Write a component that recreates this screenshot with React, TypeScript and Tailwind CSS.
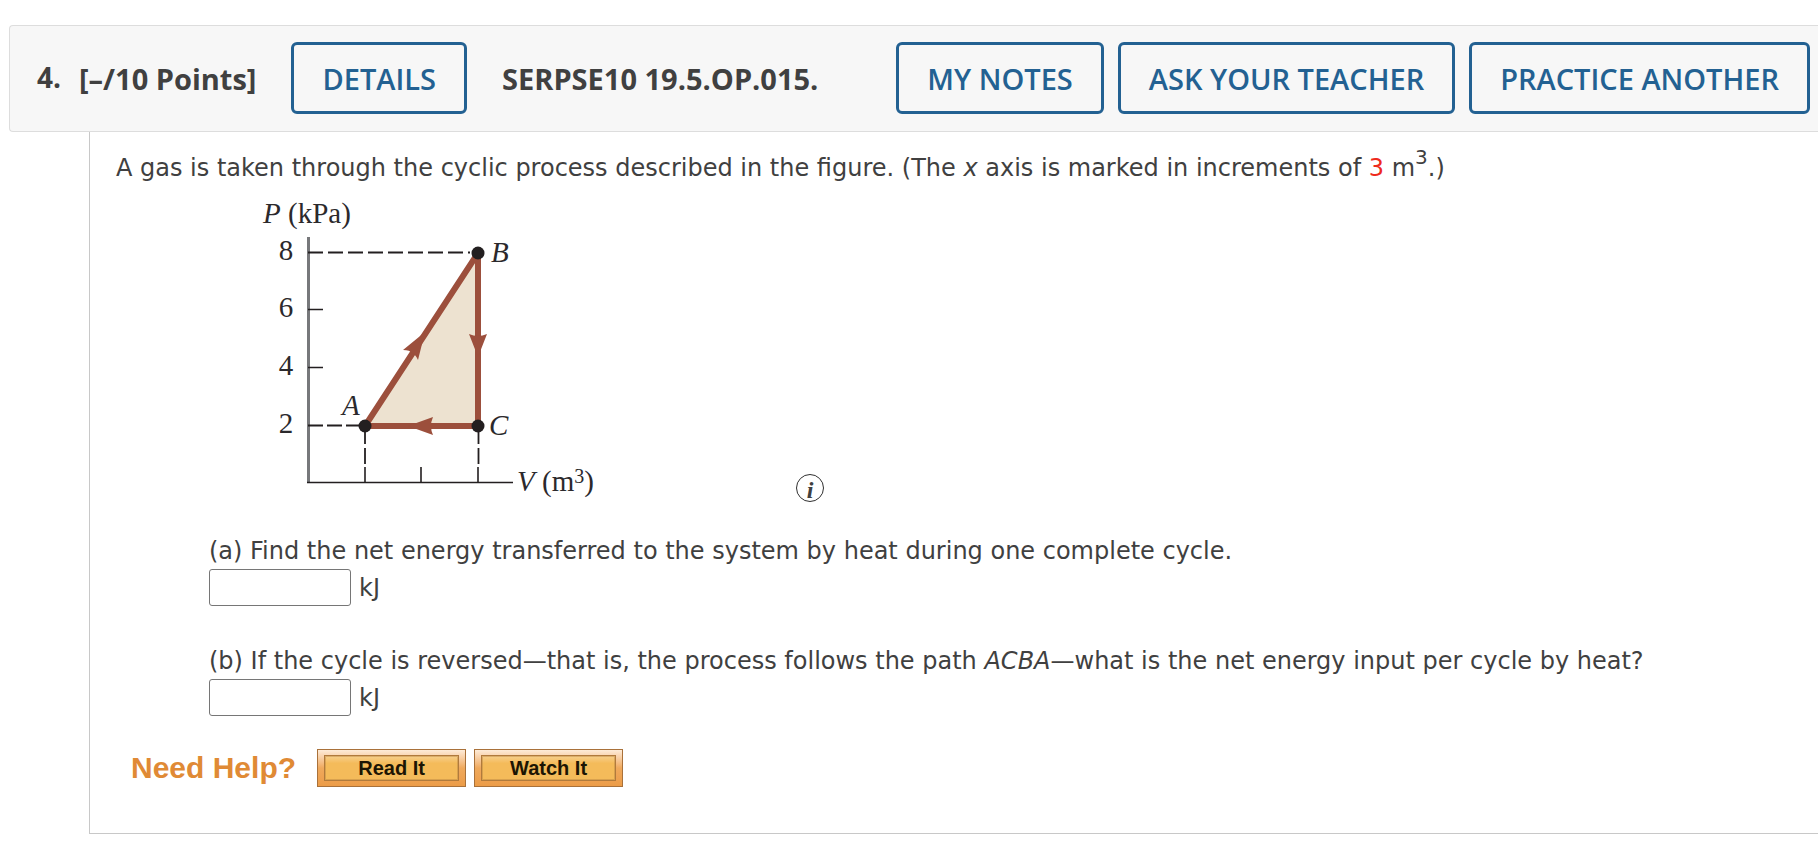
import type { ReactNode } from 'react'

const ACTIONS = ['MY NOTES', 'ASK YOUR TEACHER', 'PRACTICE ANOTHER']

const PARTS = [
  {
    id: 'a',
    question: <>(a) Find the net energy transferred to the system by heat during one complete cycle.</>,
  },
  {
    id: 'b',
    question: (
      <>
        (b) If the cycle is reversed—that is, the process follows the path <i>ACBA</i>—what is the net
        energy input per cycle by heat?
      </>
    ),
  },
]

const Y_TICKS = [
  { label: '8', y: 75 },
  { label: '6', y: 132 },
  { label: '4', y: 190 },
  { label: '2', y: 248 },
]

function OutlineButton({ children }: { children: ReactNode }) {
  return (
    <button
      type="button"
      className="h-[72px] shrink-0 rounded-md border-3 border-[#236192] px-7 pt-0.5 text-[29px] font-semibold whitespace-nowrap text-[#236192]"
    >
      {children}
    </button>
  )
}

function HelpButton({ children }: { children: ReactNode }) {
  return (
    <button
      type="button"
      className="h-[38px] w-[149px] border border-[#a9713a] bg-linear-to-b from-[#fdebd8] via-[#efa95c] to-[#ec9c48] px-1.5 py-[5px]"
    >
      <span className="flex h-full items-center justify-center border border-[#b07a3c] bg-linear-to-b from-[#f7d08c] via-[#f4bb5a] via-30% to-[#f4bb5a] text-xl font-bold text-[#1c1503] ring-1 ring-[#b07a3c]/40 ring-inset">
        {children}
      </span>
    </button>
  )
}

function PVDiagram() {
  return (
    <svg
      viewBox="0 7 400 320"
      role="img"
      aria-label="Pressure against volume for the cycle A to B to C"
      className="h-[320px] w-[400px] font-['Liberation_Serif',serif] text-[29px]"
    >
      <polygon points="135,249 248,76 248,249" fill="#ede2d0" />

      {/* Axes */}
      <g stroke="#231f20" fill="none">
        <path d="M78.500 60V305.500" strokeWidth="3" stroke="#77787b" />
        <path d="M77 305.500H283" strokeWidth="1.700" />
        <path d="M78 132.500H93M78 190.500H93M191 290V305M135 290V305M248 290V305" strokeWidth="1.600" />
        <path d="M78 75.500H240" strokeWidth="1.800" strokeDasharray="15 5" />
        <path d="M78 248.500H130" strokeWidth="1.800" strokeDasharray="15 4" />
        <path d="M135 249V267M135 271V287M248.500 249V267M248.500 271V287" strokeWidth="1.800" />
      </g>

      {/* Cycle */}
      <path d="M135 249L248 76V249Z" fill="none" stroke="#9c4f3c" strokeWidth="6" strokeLinejoin="round" />
      <g fill="#9c4f3c">
        <path d="M195 155L173 173Q180 173 182 176Q186 178 188 183Z" />
        <path d="M248 180L239 157Q248 161 257 157Z" />
        <path d="M178 249L203 240Q199 249 203 258Z" />
      </g>
      <g fill="#231f20">
        <circle cx="135" cy="249" r="6.500" />
        <circle cx="248" cy="76" r="6.500" />
        <circle cx="248" cy="249" r="6.500" />
      </g>

      <g fill="#2b292c">
        <text x="33" y="46">
          <tspan fontStyle="italic">P</tspan> (kPa)
        </text>
        {Y_TICKS.map((tick) => (
          <text key={tick.label} x="56" y={tick.y + 8} textAnchor="middle">
            {tick.label}
          </text>
        ))}
        <g fontStyle="italic">
          <text x="112" y="238">A</text>
          <text x="261" y="85">B</text>
          <text x="259" y="258">C</text>
        </g>
        <text x="287" y="314">
          <tspan fontStyle="italic">V</tspan> (m
          <tspan fontSize="20" dy="-8">3</tspan>
          <tspan dy="8">)</tspan>
        </text>
      </g>
    </svg>
  )
}

export default function App() {
  return (
    <main className="min-h-screen bg-white pt-[25px] font-['DejaVu_Sans',sans-serif] text-2xl text-[#404040]">
      {/* Question header */}
      <header className="ml-[9px] flex items-center rounded-l border border-r-0 border-[#dddddd] bg-[#f7f7f7] pt-4 pr-2 pb-[17px] pl-[27px] font-['Open_Sans',sans-serif] text-[29px] font-bold whitespace-nowrap">
        <span className="w-[42px] text-[28px]">4.</span>
        <h1 className="mr-[35px] pt-0.5">[–/10 Points]</h1>
        <OutlineButton>DETAILS</OutlineButton>
        <span className="ml-[35px] pt-0.5">SERPSE10 19.5.OP.015.</span>
        <div className="ml-auto flex gap-[14px]">
          {ACTIONS.map((action) => (
            <OutlineButton key={action}>{action}</OutlineButton>
          ))}
        </div>
      </header>

      {/* Question body */}
      <section className="ml-[89px] border-b border-l border-[#c8c8c8] pt-5 pb-[46px] pl-[26px]">
        <p className="leading-8">
          A gas is taken through the cyclic process described in the figure. (The <i>x</i> axis is marked in
          increments of <span className="text-[#ee2a1c]">3</span> m<sup className="-top-3 text-xl leading-none">3</sup>.)
        </p>

        <div className="flex items-end pl-[114px]">
          <PVDiagram />
          <button
            type="button"
            aria-label="Figure information"
            className="mb-0.5 ml-[166px] flex size-7 items-center justify-center rounded-full border border-[#303030] pt-1 font-['Liberation_Serif',serif] text-2xl leading-none font-bold italic"
          >
            i
          </button>
        </div>

        <div className="flex flex-col gap-[39px] pt-[31px] pl-[93px]">
          {PARTS.map((part) => (
            <div key={part.id} className="flex flex-col gap-0.5">
              <label htmlFor={`answer-${part.id}`} className="leading-8">
                {part.question}
              </label>
              <div className="flex items-center gap-2">
                <input
                  id={`answer-${part.id}`}
                  type="text"
                  className="h-[37px] w-[142px] rounded-[3px] border border-[#767676] bg-white px-1"
                />
                <span className="leading-8">kJ</span>
              </div>
            </div>
          ))}
        </div>

        {/* Help links */}
        <div className="mt-[33px] flex items-center gap-2 pl-[15px] font-['Liberation_Sans',sans-serif]">
          <h2 className="mr-[13px] text-[30px] leading-9 font-bold text-[#e08a35]">Need Help?</h2>
          <HelpButton>Read It</HelpButton>
          <HelpButton>Watch It</HelpButton>
        </div>
      </section>
    </main>
  )
}
